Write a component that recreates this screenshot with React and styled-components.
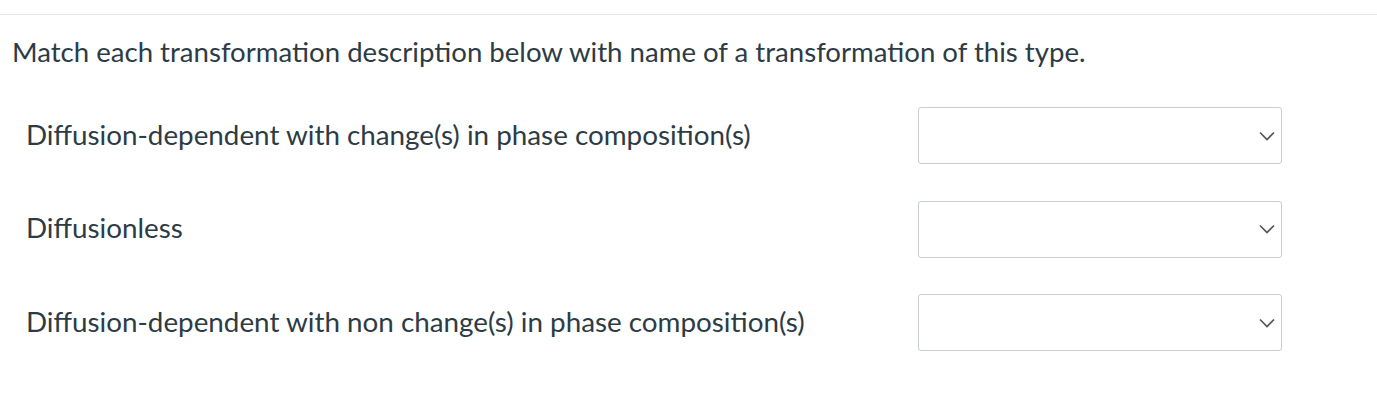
import React from "react";
import styled, { createGlobalStyle } from "styled-components";

const Global = createGlobalStyle`
  body {
    margin: 0;
    background: #ffffff;
    font-family: Lato, "Open Sans", sans-serif;
    color: #2d3b45;
  }
`;

const Page = styled.main`
  border-top: 1px solid #e8e8e8;
  margin-top: 14px;
  padding: 20px 12px 0;
`;

const Question = styled.p`
  margin: 0;
  font-size: 27.6px;
  line-height: 34px;
`;

const Answers = styled.div`
  display: flex;
  flex-direction: column;
  gap: 36.5px;
  margin-top: 38px;
  padding-left: 14px;
`;

const Row = styled.div`
  display: flex;
  align-items: center;
  justify-content: space-between;
  width: 1256px;
  height: 57px;
`;

const Label = styled.span`
  font-size: 27.8px;
  line-height: 32px;
  margin-top: -2px;
`;

const Select = styled.div`
  box-sizing: border-box;
  width: 364px;
  height: 57px;
  border: 1px solid #c7cdd1;
  border-radius: 3px;
  display: flex;
  align-items: center;
  justify-content: flex-end;
  padding-right: 6px;
`;

const Chevron = () => (
  <svg width="16" height="10" viewBox="0 0 16 10">
    <path d="M1 1.5 L8 8.5 L15 1.5" fill="none" stroke="#555" strokeWidth="1.7" />
  </svg>
);

const items = [
  "Diffusion-dependent with change(s) in phase composition(s)",
  "Diffusionless",
  "Diffusion-dependent with non change(s) in phase composition(s)",
];

export default function App() {
  return (
    <>
      <Global />
      <Page>
        <Question>
          Match each transformation description below with name of a transformation of this type.
        </Question>
        <Answers>
          {items.map((t) => (
            <Row key={t}>
              <Label>{t}</Label>
              <Select>
                <Chevron />
              </Select>
            </Row>
          ))}
        </Answers>
      </Page>
    </>
  );
}
